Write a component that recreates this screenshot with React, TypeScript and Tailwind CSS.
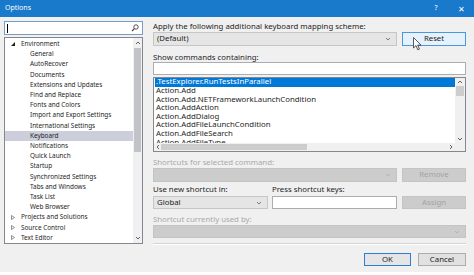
import React from 'react';

const treeItems: { label: string; level: number; arrow?: 'open' | 'closed'; selected?: boolean }[] = [
    { label: 'Environment', level: 0, arrow: 'open' },
    { label: 'General', level: 1 },
    { label: 'AutoRecover', level: 1 },
    { label: 'Documents', level: 1 },
    { label: 'Extensions and Updates', level: 1 },
    { label: 'Find and Replace', level: 1 },
    { label: 'Fonts and Colors', level: 1 },
    { label: 'Import and Export Settings', level: 1 },
    { label: 'International Settings', level: 1 },
    { label: 'Keyboard', level: 1, selected: true },
    { label: 'Notifications', level: 1 },
    { label: 'Quick Launch', level: 1 },
    { label: 'Startup', level: 1 },
    { label: 'Synchronized Settings', level: 1 },
    { label: 'Tabs and Windows', level: 1 },
    { label: 'Task List', level: 1 },
    { label: 'Web Browser', level: 1 },
    { label: 'Projects and Solutions', level: 0, arrow: 'closed' },
    { label: 'Source Control', level: 0, arrow: 'closed' },
    { label: 'Text Editor', level: 0, arrow: 'closed' },
];

const commands = [
    '.TestExplorer.RunTestsInParallel',
    'Action.Add',
    'Action.Add.NETFrameworkLaunchCondition',
    'Action.AddAction',
    'Action.AddDialog',
    'Action.AddFileLaunchCondition',
    'Action.AddFileSearch',
    'Action.AddFileType',
];

const Chevron = ({ dir = 'down', color = '#606060' }: { dir?: 'down' | 'up' | 'left' | 'right'; color?: string }) => {
    const paths = {
        down: 'M1 2 L3 4 L5 2',
        up: 'M1 4 L3 2 L5 4',
        left: 'M4 1 L2 3 L4 5',
        right: 'M2 1 L4 3 L2 5',
    };
    return (
        <svg width="6" height="6" viewBox="0 0 6 6">
            <path d={paths[dir]} fill="none" stroke={color} strokeWidth="0.9" />
        </svg>
    );
};

const Dropdown = ({
    value,
    disabled,
    className,
}: {
    value?: string;
    disabled?: boolean;
    className?: string;
}) => (
    <div
        className={`flex items-center justify-between border px-[3px] ${
            disabled ? 'bg-[#cccccc] border-[#c4c4c4]' : 'bg-[#e5e5e5] border-[#c6c6c6] text-[#1e1e1e]'
        } ${className ?? ''}`}
    >
        <span>{value}</span>
        <span className="pr-[2px]">
            <Chevron color={disabled ? '#b0b0b0' : '#707070'} />
        </span>
    </div>
);

const Btn = ({
    children,
    variant = 'normal',
    className,
}: {
    children: React.ReactNode;
    variant?: 'normal' | 'hover' | 'default' | 'disabled';
    className?: string;
}) => {
    const styles = {
        normal: 'bg-[#e1e1e1] border-[#adadad] text-[#1e1e1e]',
        hover: 'bg-[#e5f1fb] border-[#4a97df] text-[#1e1e1e]',
        default: 'bg-[#e5e5e5] border-[#2b7fd6] text-[#1e1e1e]',
        disabled: 'bg-[#cccccc] border-[#c4c4c4] text-[#a3a3a3]',
    };
    return (
        <div className={`flex items-center justify-center border ${styles[variant]} ${className ?? ''}`}>
            {children}
        </div>
    );
};

export default function App() {
    return (
        <div className="relative flex h-[275px] w-[474px] flex-col overflow-hidden bg-[#f0f0f0] font-['Noto_Sans',sans-serif] text-[7.8px] text-[#1e1e1e]">
            {/* title bar */}
            <div className="flex h-[17px] shrink-0 items-center bg-[#1979ca] pl-[5px] text-[7px] text-white">
                <span>Options</span>
                <span className="ml-auto w-[8px] text-center">?</span>
                <span className="ml-[17px] mr-[9px] w-[8px] text-center text-[8px]">✕</span>
            </div>

            <div className="flex flex-1 gap-[10px] pl-[4px] pr-[8px] pt-[4px]">
                {/* left: search + tree */}
                <div className="flex w-[139px] flex-col gap-[2px] text-[6.4px]">
                    <div className="flex h-[14px] items-center border border-[#7a9cc6] bg-white pl-[2px] pr-[3px]">
                        <div className="h-[9px] w-px bg-black" />
                        <svg className="ml-auto" width="8" height="8" viewBox="0 0 8 8">
                            <circle cx="5" cy="3" r="2.2" fill="none" stroke="#404040" strokeWidth="0.9" />
                            <path d="M3.4 4.6 L1 7" stroke="#404040" strokeWidth="1.1" />
                        </svg>
                    </div>
                    <div className="flex h-[207px] border border-[#828790] bg-white">
                        <div className="flex flex-1 flex-col pt-px">
                            {treeItems.map((it) => (
                                <div
                                    key={it.label}
                                    className={`flex h-[10.25px] items-center leading-none ${
                                        it.selected ? 'bg-[#cccedb]' : ''
                                    } ${it.level === 0 ? 'pl-[6px]' : 'pl-[25px]'}`}
                                >
                                    {it.level === 0 && (
                                        <span className="mr-[6px] flex w-[4px] justify-center">
                                            {it.arrow === 'open' ? (
                                                <svg width="4" height="4" viewBox="0 0 4 4">
                                                    <path d="M4 0 L4 4 L0 4 Z" fill="#1e1e1e" />
                                                </svg>
                                            ) : (
                                                <svg width="4" height="5" viewBox="0 0 4 5">
                                                    <path d="M0.5 0.5 L3.5 2.5 L0.5 4.5 Z" fill="none" stroke="#606060" strokeWidth="0.7" />
                                                </svg>
                                            )}
                                        </span>
                                    )}
                                    <span>{it.label}</span>
                                </div>
                            ))}
                        </div>
                        {/* tree scrollbar */}
                        <div className="flex w-[9px] flex-col items-center bg-[#f0f0f0]">
                            <div className="flex h-[10px] items-center">
                                <Chevron dir="up" color="#505050" />
                            </div>
                            <div className="h-[104px] w-[7px] bg-[#c2c3c9]" />
                            <div className="flex-1" />
                            <div className="flex h-[10px] items-center">
                                <Chevron dir="down" color="#505050" />
                            </div>
                        </div>
                    </div>
                </div>

                {/* right panel */}
                <div className="flex flex-1 flex-col">
                    <div className="h-[11px] leading-[11px]">Apply the following additional keyboard mapping scheme:</div>
                    <div className="flex h-[14px] gap-[5px]">
                        <Dropdown value="(Default)" className="flex-1" />
                        <Btn variant="hover" className="w-[64px]">
                            Reset
                        </Btn>
                    </div>

                    <div className="mt-[6px] h-[10px] leading-[10px]">Show commands containing:</div>
                    <div className="h-[13px] border border-[#abadb3] bg-white" />

                    <div className="mt-[2px] flex h-[75px] flex-col border border-[#828790] bg-white">
                        <div className="flex flex-1 overflow-hidden">
                            <div className="flex flex-1 flex-col overflow-hidden pl-[1px]">
                                {commands.map((c, i) => (
                                    <div
                                        key={c}
                                        className={`flex h-[8.6px] shrink-0 items-center pl-[1px] leading-none ${
                                            i === 0 ? 'bg-[#0078d7] text-white' : ''
                                        }`}
                                    >
                                        {c}
                                    </div>
                                ))}
                            </div>
                            <div className="flex w-[10px] flex-col items-center bg-[#f0f0f0]">
                                <div className="flex h-[8px] items-center">
                                    <Chevron dir="up" color="#505050" />
                                </div>
                                <div className="h-[10px] w-[8px] bg-[#cdcdcd]" />
                                <div className="flex-1" />
                                <div className="flex h-[8px] items-center">
                                    <Chevron dir="down" color="#505050" />
                                </div>
                            </div>
                        </div>
                        <div className="flex h-[8px] items-center bg-[#f0f0f0]">
                            <div className="flex w-[7px] justify-center">
                                <Chevron dir="left" color="#505050" />
                            </div>
                            <div className="h-[6px] w-[146px] bg-[#cdcdcd]" />
                            <div className="flex-1" />
                            <div className="flex w-[8px] justify-center">
                                <Chevron dir="right" color="#505050" />
                            </div>
                            <div className="w-[10px]" />
                        </div>
                    </div>

                    <div className="mt-[5px] h-[10px] leading-[10px] text-[#a8a8a8]">Shortcuts for selected command:</div>
                    <div className="mt-[1px] flex h-[14px] gap-[5px]">
                        <Dropdown disabled className="flex-1" />
                        <Btn variant="disabled" className="w-[64px]">
                            Remove
                        </Btn>
                    </div>

                    <div className="mt-[2px] flex h-[10px] leading-[10px]">
                        <span className="w-[119px]">Use new shortcut in:</span>
                        <span>Press shortcut keys:</span>
                    </div>
                    <div className="mt-[2px] flex h-[13px]">
                        <Dropdown value="Global" className="w-[115px]" />
                        <div className="ml-[4px] w-[125px] border border-[#abadb3] bg-white" />
                        <Btn variant="disabled" className="ml-[5px] flex-1">
                            Assign
                        </Btn>
                    </div>

                    <div className="mt-[5px] h-[10px] leading-[10px] text-[#a8a8a8]">Shortcut currently used by:</div>
                    <Dropdown disabled className="mt-[1px] h-[13px]" />

                    <div className="mt-[5px] h-px bg-[#d5d5d5]" />
                    <div className="h-px bg-white" />

                    <div className="mt-[8px] flex h-[13px] justify-end gap-[7px]">
                        <Btn variant="default" className="w-[47px]">
                            OK
                        </Btn>
                        <Btn className="w-[48px]">Cancel</Btn>
                    </div>
                </div>
            </div>
            <div className="h-[3px] shrink-0 bg-white" />

            {/* mouse pointer over Reset */}
            <svg className="absolute left-[413px] top-[37px]" width="9" height="14" viewBox="0 0 9 14">
                <path
                    d="M0.5 0.5 L0.5 11 L3 8.6 L4.8 12.8 L6.4 12.1 L4.7 8.1 L8 8.1 Z"
                    fill="white"
                    stroke="#303030"
                    strokeWidth="0.8"
                    strokeLinejoin="round"
                />
            </svg>
        </div>
    );
}
